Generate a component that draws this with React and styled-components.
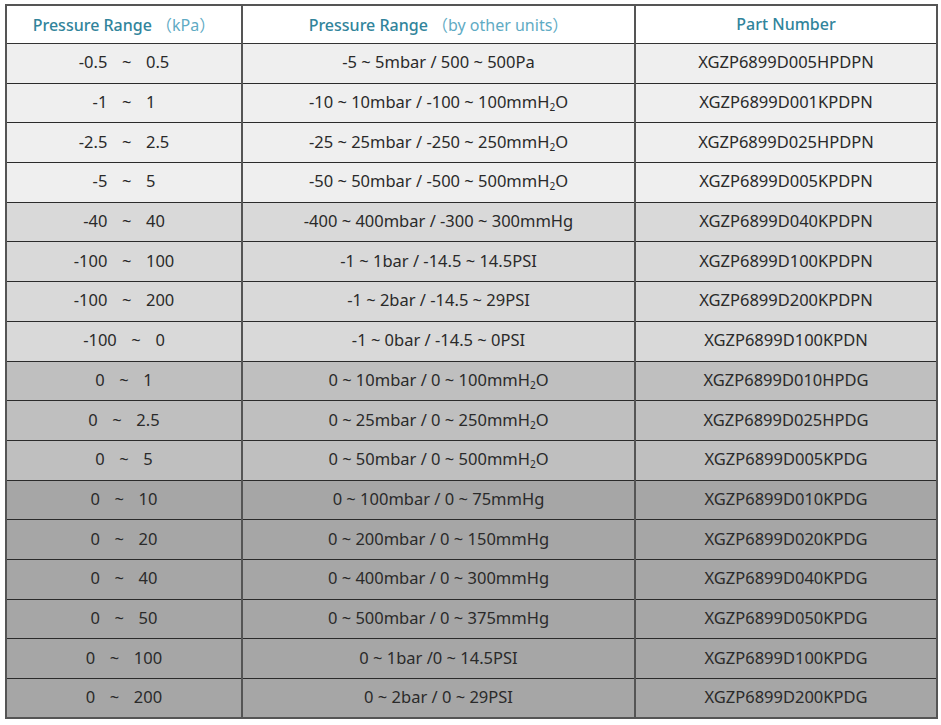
import React from "react";
import styled, { createGlobalStyle } from "styled-components";

const GlobalStyle = createGlobalStyle`
  body {
    margin: 0;
    background: #ffffff;
    font-family: "Noto Sans", "Noto Sans CJK SC", sans-serif;
  }
`;

const Page = styled.div`
  padding: 4px 0 0 5px;
  border-top: 3px solid #ececec;
  margin-top: -3px;
`;

const Table = styled.table`
  width: 931px;
  border-collapse: collapse;
  table-layout: fixed;
  border: 2px solid #555;
  font-size: 16.5px;
  color: #2a2a2a;
`;

const HeadCell = styled.th`
  height: 35px;
  padding: 0 0 2px;
  font-weight: 500;
  font-size: 16px;
  color: #31849b;
  background: #fff;
  text-align: center;
  border: 2px solid #555;
  border-top: none;
  border-bottom: 1.5px solid #333;

  span {
    color: #5fabc4;
    font-weight: 400;
  }
`;

const shades = {
  a: "#efefef",
  b: "#d9d9d9",
  c: "#bfbfbf",
  d: "#a6a6a6",
};

const Row = styled.tr`
  height: 39.7px;
  background: ${({ $shade }) => shades[$shade]};
`;

const Cell = styled.td`
  padding: 0 0 3px;
  text-align: center;
  white-space: pre;
  word-spacing: ${({ $wide }) => ($wide ? "3px" : "0")};
  border-left: 2px solid #555;
  border-right: 2px solid #555;
  border-bottom: 1.5px solid #2b2b2b;

  sub {
    font-size: 10px;
    vertical-align: -3px;
    line-height: 0;
  }
`;

const H2O = () => (
  <>
    mmH<sub>2</sub>O
  </>
);

const rows = [
  ["a", "-0.5  ~  0.5", <>-5 ~ 5mbar / 500 ~ 500Pa</>, "XGZP6899D005HPDPN"],
  ["a", "-1  ~  1", <>-10 ~ 10mbar / -100 ~ 100<H2O /></>, "XGZP6899D001KPDPN"],
  ["a", "-2.5  ~  2.5", <>-25 ~ 25mbar / -250 ~ 250<H2O /></>, "XGZP6899D025HPDPN"],
  ["a", "-5  ~  5", <>-50 ~ 50mbar / -500 ~ 500<H2O /></>, "XGZP6899D005KPDPN"],
  ["b", "-40  ~  40", <>-400 ~ 400mbar / -300 ~ 300mmHg</>, "XGZP6899D040KPDPN"],
  ["b", "-100  ~  100", <>-1 ~ 1bar / -14.5 ~ 14.5PSI</>, "XGZP6899D100KPDPN"],
  ["b", "-100  ~  200", <>-1 ~ 2bar / -14.5 ~ 29PSI</>, "XGZP6899D200KPDPN"],
  ["b", "-100  ~  0", <>-1 ~ 0bar / -14.5 ~ 0PSI</>, "XGZP6899D100KPDN"],
  ["c", "0  ~  1", <>0 ~ 10mbar / 0 ~ 100<H2O /></>, "XGZP6899D010HPDG"],
  ["c", "0  ~  2.5", <>0 ~ 25mbar / 0 ~ 250<H2O /></>, "XGZP6899D025HPDG"],
  ["c", "0  ~  5", <>0 ~ 50mbar / 0 ~ 500<H2O /></>, "XGZP6899D005KPDG"],
  ["d", "0  ~  10", <>0 ~ 100mbar / 0 ~ 75mmHg</>, "XGZP6899D010KPDG"],
  ["d", "0  ~  20", <>0 ~ 200mbar / 0 ~ 150mmHg</>, "XGZP6899D020KPDG"],
  ["d", "0  ~  40", <>0 ~ 400mbar / 0 ~ 300mmHg</>, "XGZP6899D040KPDG"],
  ["d", "0  ~  50", <>0 ~ 500mbar / 0 ~ 375mmHg</>, "XGZP6899D050KPDG"],
  ["d", "0  ~  100", <>0 ~ 1bar /0 ~ 14.5PSI</>, "XGZP6899D100KPDG"],
  ["d", "0  ~  200", <>0 ~ 2bar / 0 ~ 29PSI</>, "XGZP6899D200KPDG"],
];

const App = () => (
  <Page>
    <GlobalStyle />
    <Table>
      <colgroup>
        <col style={{ width: 236 }} />
        <col style={{ width: 393 }} />
        <col style={{ width: 302 }} />
      </colgroup>
      <thead>
        <tr>
          <HeadCell>
            Pressure Range <span>（kPa）</span>
          </HeadCell>
          <HeadCell>
            Pressure Range <span>（by other units）</span>
          </HeadCell>
          <HeadCell>Part Number</HeadCell>
        </tr>
      </thead>
      <tbody>
        {rows.map(([shade, kpa, other, part]) => (
          <Row key={part + kpa} $shade={shade}>
            <Cell $wide>{kpa}</Cell>
            <Cell>{other}</Cell>
            <Cell>{part}</Cell>
          </Row>
        ))}
      </tbody>
    </Table>
  </Page>
);

export default App;
